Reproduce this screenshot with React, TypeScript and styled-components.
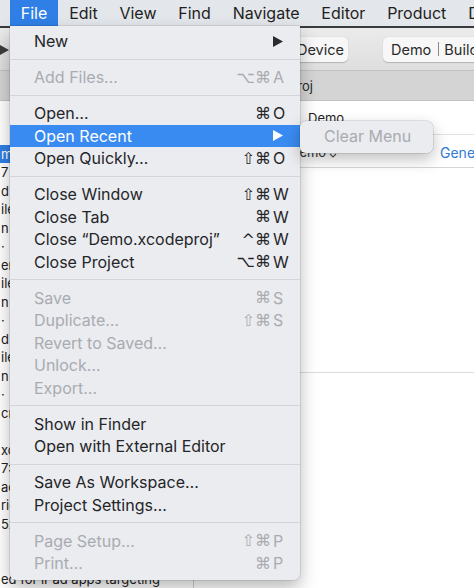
import React from "react";
import styled, { createGlobalStyle } from "styled-components";

const GlobalStyle = createGlobalStyle`
  html, body {
    margin: 0;
    padding: 0;
    width: 474px;
    height: 588px;
    overflow: hidden;
    background: #ffffff;
  }
  body {
    font-family: Inter, "Noto Sans", "DejaVu Sans", sans-serif;
    -webkit-font-smoothing: antialiased;
  }
`;

type Item =
  | { kind: "sep" }
  | {
      kind: "item";
      label: string;
      mods?: string;
      keyChar?: string;
      submenu?: boolean;
      disabled?: boolean;
      active?: boolean;
    };

// items of the File menu, in order
const fileMenu: Item[] = [
  { kind: "item", label: "New", submenu: true },
  { kind: "sep" },
  { kind: "item", label: "Add Files…", mods: "⌥⌘", keyChar: "A", disabled: true },
  { kind: "sep" },
  { kind: "item", label: "Open…", mods: "⌘", keyChar: "O" },
  { kind: "item", label: "Open Recent", submenu: true, active: true },
  { kind: "item", label: "Open Quickly…", mods: "⇧⌘", keyChar: "O" },
  { kind: "sep" },
  { kind: "item", label: "Close Window", mods: "⇧⌘", keyChar: "W" },
  { kind: "item", label: "Close Tab", mods: "⌘", keyChar: "W" },
  { kind: "item", label: "Close “Demo.xcodeproj”", mods: "^⌘", keyChar: "W" },
  { kind: "item", label: "Close Project", mods: "⌥⌘", keyChar: "W" },
  { kind: "sep" },
  { kind: "item", label: "Save", mods: "⌘", keyChar: "S", disabled: true },
  { kind: "item", label: "Duplicate…", mods: "⇧⌘", keyChar: "S", disabled: true },
  { kind: "item", label: "Revert to Saved…", disabled: true },
  { kind: "item", label: "Unlock…", disabled: true },
  { kind: "item", label: "Export…", disabled: true },
  { kind: "sep" },
  { kind: "item", label: "Show in Finder" },
  { kind: "item", label: "Open with External Editor" },
  { kind: "sep" },
  { kind: "item", label: "Save As Workspace…" },
  { kind: "item", label: "Project Settings…" },
  { kind: "sep" },
  { kind: "item", label: "Page Setup…", mods: "⇧⌘", keyChar: "P", disabled: true },
  { kind: "item", label: "Print…", mods: "⌘", keyChar: "P", disabled: true },
];

const menuTitles = ["File", "Edit", "View", "Find", "Navigate", "Editor", "Product", "Debug"];

// navigator rows behind the menu, only the first letters show past its edge
const navRows = [
  "7",
  "d",
  "ile",
  "n",
  "·",
  "er",
  "ile",
  "n",
  "·",
  "d",
  "ile",
  "n",
  "·",
  "cr",
  "",
  "xc",
  "7:",
  "ac",
  "ric",
  "5x",
  "",
  "",
  "ed for iPad apps targeting",
];

function Arrow({ white }: { white?: boolean }) {
  return (
    <svg width="10" height="11" viewBox="0 0 10 11">
      <polygon points="0,0 10,5.5 0,11" fill={white ? "#ffffff" : "#2b2b2e"} />
    </svg>
  );
}

function App() {
  return (
    <>
      <GlobalStyle />
      <Screen>
        <MenuBar>
          {menuTitles.map((t, i) => (
            <MenuTitle key={t} $active={i === 0}>
              {t}
            </MenuTitle>
          ))}
        </MenuBar>

        <Window>
          <Toolbar>
            <RunButton>
              <svg width="9" height="10" viewBox="0 0 9 10">
                <polygon points="0,0 9,5 0,10" fill="#3c3c3c" />
              </svg>
            </RunButton>
            <SchemePill>Device</SchemePill>
            <StatusPill>
              <span>Demo</span>
              <PipeBar />
              <span>Build Demo</span>
            </StatusPill>
          </Toolbar>

          <TabBar>
            <TabLabel>roj</TabLabel>
          </TabBar>

          <Body>
            <Sidebar>
              <NavRow $selected>m</NavRow>
              {navRows.map((r, i) => (
                <NavRow key={i}>{r}</NavRow>
              ))}
            </Sidebar>

            <Editor>
              <TargetRow>Demo</TargetRow>
              <TabsRow>
                <PopupButton>
                  Demo
                  <svg width="8" height="11" viewBox="0 0 8 11">
                    <path d="M1 4 L4 1 L7 4 M1 7 L4 10 L7 7" stroke="#555" strokeWidth="1.2" fill="none" />
                  </svg>
                </PopupButton>
                <TabLink>General</TabLink>
              </TabsRow>
              <Pane $tall />
              <Pane />
            </Editor>
          </Body>
        </Window>

        <Dropdown>
          {fileMenu.map((it, i) =>
            it.kind === "sep" ? (
              <Separator key={i} />
            ) : (
              <Row key={i} $disabled={it.disabled} $active={it.active}>
                <span>{it.label}</span>
                <Mods>{it.mods}</Mods>
                <KeyCell>{it.submenu ? <Arrow white={it.active} /> : it.keyChar}</KeyCell>
              </Row>
            )
          )}
        </Dropdown>

        <Submenu>
          <Row $disabled>
            <span>Clear Menu</span>
          </Row>
        </Submenu>
      </Screen>
    </>
  );
}

export default App;

const Screen = styled.div`
  position: relative;
  width: 474px;
  height: 588px;
  overflow: hidden;
  display: flex;
  flex-direction: column;
  background: #ffffff;
`;

const MenuBar = styled.div`
  height: 26px;
  flex: none;
  display: flex;
  padding-left: 10px;
  background: #e3e6eb;
  white-space: nowrap;
`;

const MenuTitle = styled.div<{ $active?: boolean }>`
  flex: none;
  display: flex;
  align-items: center;
  padding: 0 11px 1px 10.8px;
  font-size: 16px;
  color: ${(p) => (p.$active ? "#ffffff" : "#1f1f22")};
  background: ${(p) => (p.$active ? "#2f7fe6" : "transparent")};
`;

const Window = styled.div`
  flex: 1;
  display: flex;
  flex-direction: column;
  border-top: 2px solid #3a3a3c;
  min-height: 0;
`;

const Toolbar = styled.div`
  height: 42px;
  flex: none;
  display: flex;
  align-items: center;
  background: linear-gradient(#ebebeb, #dedede);
  white-space: nowrap;
  font-size: 14.5px;
  color: #2a2a2a;
`;

const RunButton = styled.div`
  width: 40px;
  flex: none;
  display: flex;
  align-items: center;
  padding-top: 2px;
`;

const SchemePill = styled.div`
  width: 308px;
  flex: none;
  height: 25px;
  box-sizing: border-box;
  display: flex;
  align-items: center;
  justify-content: flex-end;
  padding-right: 4px;
  background: #f7f7f7;
  border-radius: 5px;
  box-shadow: 0 0.5px 1px rgba(0, 0, 0, 0.2);
`;

const StatusPill = styled.div`
  margin-left: 35px;
  width: 160px;
  flex: none;
  height: 25px;
  display: flex;
  align-items: center;
  gap: 5px;
  padding-left: 8px;
  background: #f7f7f7;
  border-radius: 5px;
  box-shadow: 0 0.5px 1px rgba(0, 0, 0, 0.2);
`;

const PipeBar = styled.span`
  width: 1px;
  height: 14px;
  margin-left: 2px;
  background: #8a8a8a;
`;

const TabBar = styled.div`
  height: 29px;
  flex: none;
  display: flex;
  align-items: center;
  background: #d4d4d4;
  border-top: 1px solid #c2c2c2;
  border-bottom: 1px solid #c2c2c2;
  font-size: 13px;
  color: #2a2a2a;
`;

const TabLabel = styled.div`
  width: 313px;
  text-align: right;
`;

const Body = styled.div`
  flex: 1;
  display: flex;
  min-height: 0;
`;

const Sidebar = styled.div`
  width: 193px;
  flex: none;
  border-right: 1px solid #cfcfcf;
  padding-top: 44px;
  display: flex;
  flex-direction: column;
  font-size: 13px;
  color: #222;
  white-space: nowrap;
  overflow: hidden;
`;

const NavRow = styled.div<{ $selected?: boolean }>`
  height: ${(p) => (p.$selected ? "18px" : "18.5px")};
  flex: none;
  line-height: ${(p) => (p.$selected ? "18px" : "18.5px")};
  padding-left: 1px;
  background: ${(p) => (p.$selected ? "#2f7fe6" : "transparent")};
  color: ${(p) => (p.$selected ? "#ffffff" : "#222")};
`;

const Editor = styled.div`
  flex: 1;
  display: flex;
  flex-direction: column;
  white-space: nowrap;
`;

const TargetRow = styled.div`
  height: 33px;
  flex: none;
  display: flex;
  align-items: center;
  padding: 0 0 0 114px;
  border-bottom: 1px solid #e2e2e2;
  font-size: 13px;
  color: #1e1e1e;
`;

const TabsRow = styled.div`
  height: 33px;
  flex: none;
  display: flex;
  align-items: center;
  padding-left: 96px;
  padding-top: 2px;
  box-sizing: border-box;
  border-bottom: 1px solid #d6d6d6;
  font-size: 14px;
`;

const PopupButton = styled.div`
  width: 150px;
  display: flex;
  align-items: center;
  gap: 3px;
  color: #333;
  font-size: 13px;
`;

const TabLink = styled.div`
  color: #2f7bd6;
`;

const Pane = styled.div<{ $tall?: boolean }>`
  height: ${(p) => (p.$tall ? "204px" : "auto")};
  flex: ${(p) => (p.$tall ? "none" : "1")};
  border-bottom: ${(p) => (p.$tall ? "1px solid #dcdcdc" : "none")};
`;

const Dropdown = styled.div`
  position: absolute;
  left: 10px;
  top: 26px;
  width: 290px;
  padding: 4px 0 5px;
  display: flex;
  flex-direction: column;
  background: #eaecf0;
  border-radius: 0 0 6px 6px;
  box-shadow: 0 8px 18px rgba(0, 0, 0, 0.28), 0 0 0 0.5px rgba(0, 0, 0, 0.18);
`;

const Submenu = styled.div`
  position: absolute;
  left: 300px;
  top: 121px;
  width: 133px;
  padding: 4px 0 5px;
  background: #eaecf0;
  border-radius: 6px;
  box-shadow: 0 6px 16px rgba(0, 0, 0, 0.26), 0 0 0 0.5px rgba(0, 0, 0, 0.18);
`;

const Row = styled.div<{ $disabled?: boolean; $active?: boolean }>`
  height: 22.5px;
  display: grid;
  grid-template-columns: 1fr auto 18px;
  align-items: center;
  padding: 0 10px 0 24px;
  font-size: 16px;
  white-space: nowrap;
  color: ${(p) => (p.$active ? "#ffffff" : p.$disabled ? "#a9abb1" : "#252528")};
  background: ${(p) => (p.$active ? "#3a8bf1" : "transparent")};
`;

const Mods = styled.span`
  text-align: right;
  font-family: "DejaVu Sans", sans-serif;
  font-size: 16px;
  padding-right: 1px;
`;

const KeyCell = styled.span`
  display: flex;
  align-items: center;
  padding-left: 1px;
`;

const Separator = styled.div`
  height: 13.5px;
  display: flex;
  align-items: center;
  &::after {
    content: "";
    flex: 1;
    height: 1px;
    background: #d3d5da;
  }
`;
